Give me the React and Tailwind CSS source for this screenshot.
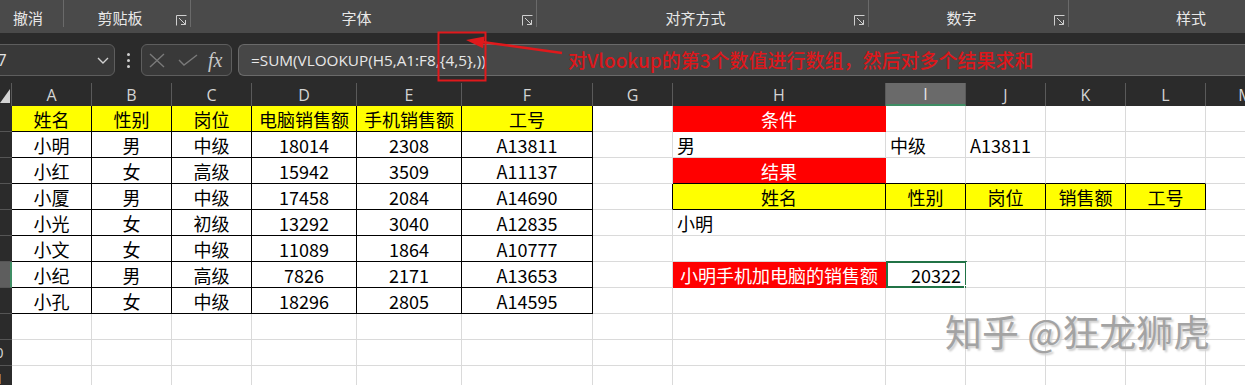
import React from 'react';

const W = ['w-[80px]', 'w-[80px]', 'w-[80px]', 'w-[105px]', 'w-[105px]', 'w-[131px]', 'w-[80px]', 'w-[213px]', 'w-[80px]', 'w-[80px]', 'w-[80px]', 'w-[80px]', 'w-[80px]'];
const LETTERS = ['A', 'B', 'C', 'D', 'E', 'F', 'G', 'H', 'I', 'J', 'K', 'L', 'M'];

const plain = 'bg-white border-[#dadada]';
const boxed = 'bg-white border-black';
const yel = 'bg-[#ffff00] border-black';
const red = 'bg-[#ff0000] border-[#ff0000] text-white';

const tableRows = [
  ['姓名', '性别', '岗位', '电脑销售额', '手机销售额', '工号'],
  ['小明', '男', '中级', '18014', '2308', 'A13811'],
  ['小红', '女', '高级', '15942', '3509', 'A11137'],
  ['小厦', '男', '中级', '17458', '2084', 'A14690'],
  ['小光', '女', '初级', '13292', '3040', 'A12835'],
  ['小文', '女', '中级', '11089', '1864', 'A10777'],
  ['小纪', '男', '高级', '7826', '2171', 'A13653'],
  ['小孔', '女', '中级', '18296', '2805', 'A14595'],
];

function buildRows() {
  const rows = [];
  for (let r = 0; r < 11; r++) {
    const cells = LETTERS.map(() => ({ t: '', s: plain, a: 'justify-center' }));
    if (r < tableRows.length) {
      tableRows[r].forEach((t, c) => {
        cells[c] = { t, s: r === 0 ? yel : boxed, a: 'justify-center' };
      });
    }
    if (r === 0) cells[7] = { t: '条件', s: red, a: 'justify-center' };
    if (r === 1) {
      cells[7] = { t: '男', s: plain, a: 'justify-start pl-[4px]' };
      cells[8] = { t: '中级', s: plain, a: 'justify-start pl-[4px]' };
      cells[9] = { t: 'A13811', s: plain, a: 'justify-start pl-[4px]' };
    }
    if (r === 2) {
      cells[7] = { t: '结果', s: red + ' border-b-black', a: 'justify-center' };
      for (let c = 8; c <= 11; c++) cells[c] = { t: '', s: plain + ' border-b-black', a: '' };
    }
    if (r === 3) {
      cells[6] = { t: '', s: plain + ' border-r-black', a: '' };
      ['姓名', '性别', '岗位', '销售额', '工号'].forEach((t, i) => {
        cells[7 + i] = { t, s: yel, a: 'justify-center' };
      });
    }
    if (r === 4) cells[7] = { t: '小明', s: plain, a: 'justify-start pl-[4px]' };
    if (r === 6) {
      cells[7] = { t: '小明手机加电脑的销售额', s: red, a: 'justify-center' };
      cells[8] = { t: '20322', s: plain, a: 'justify-end pr-[4px]', sel: true };
    }
    rows.push(cells);
  }
  return rows;
}

function Launcher() {
  return (
    <svg width="11" height="11" viewBox="0 0 11 11" fill="none" stroke="#cfcfcf" strokeWidth="1" className="self-end mb-[7px] shrink-0">
      <path d="M0.5 10.5V0.5H10.5" />
      <path d="M3 3L9.5 9.5" />
      <path d="M5 9.5H9.5V5" />
    </svg>
  );
}

function Sep() {
  return <div className="w-px h-[27px] bg-[#6a6a6a] self-start shrink-0" />;
}

function Ribbon() {
  return (
    <div className="h-[33px] bg-[#4a4a4a] flex text-[15px] leading-[20px] text-[#e8e8e8]">
      <div className="w-[63px] flex items-end justify-center pb-[5px] pr-[7px]">撤消</div>
      <Sep />
      <div className="w-[123px] flex mr-[3px]">
        <div className="flex-1 flex items-end justify-center pb-[5px]">剪贴板</div>
        <Launcher />
      </div>
      <Sep />
      <div className="w-[342px] flex mr-[3px]">
        <div className="flex-1 flex items-end justify-center pb-[5px]">字体</div>
        <Launcher />
      </div>
      <Sep />
      <div className="w-[328px] flex mr-[3px]">
        <div className="flex-1 flex items-end justify-center pb-[5px]">对齐方式</div>
        <Launcher />
      </div>
      <Sep />
      <div className="w-[196px] flex mr-[3px]">
        <div className="flex-1 flex items-end justify-center pb-[5px]">数字</div>
        <Launcher />
      </div>
      <Sep />
      <div className="flex-1 flex items-end pb-[5px] pl-[107px]">样式</div>
    </div>
  );
}

function FormulaBar() {
  return (
    <div className="bg-[#2b2b2b] pt-[11px] pb-[7px]">
      <div className="h-[32px] flex items-stretch">
        <div className="-ml-[23px] w-[138px] shrink-0 rounded-[6px] border border-[#5e5e5e] bg-[#393939] flex items-center pl-[15px] pr-[5px]">
          <span className="font-['Open_Sans',sans-serif] text-[16px] text-[#e4e4e4]">I7</span>
          <div className="flex-1" />
          <svg width="12" height="7" viewBox="0 0 12 7" fill="none" stroke="#d0d0d0" strokeWidth="1.4">
            <path d="M1 1l5 5 5-5" />
          </svg>
        </div>
        <div className="w-[26px] shrink-0 flex flex-col items-center justify-center gap-[3px]">
          <span className="w-[3px] h-[3px] bg-[#cfcfcf] rounded-full" />
          <span className="w-[3px] h-[3px] bg-[#cfcfcf] rounded-full" />
          <span className="w-[3px] h-[3px] bg-[#cfcfcf] rounded-full" />
        </div>
        <div className="w-[91px] shrink-0 rounded-[6px] border border-[#5e5e5e] bg-[#393939] flex items-center pl-[7px]">
          <svg width="16" height="15" viewBox="0 0 16 15" fill="none" stroke="#7a7a7a" strokeWidth="1.4">
            <path d="M1 1l14 13M15 1L1 14" />
          </svg>
          <svg width="20" height="12" viewBox="0 0 20 12" fill="none" stroke="#7a7a7a" strokeWidth="1.4" className="ml-[13px]">
            <path d="M1 6l5 5L19 1" />
          </svg>
          <span className="ml-[10px] font-['Liberation_Serif',serif] italic text-[20px] leading-none text-[#c8c8c8]">fx</span>
        </div>
        <div className="flex-1 ml-[6px] rounded-l-[6px] border border-r-0 border-[#6a6a6a] bg-[#474747] flex items-center pl-[12px]">
          <span className="font-['Open_Sans',sans-serif] text-[15.3px] text-[#e8e8e8] whitespace-nowrap">=SUM(VLOOKUP(H5,A1:F8,{'{'}4,5{'}'},))</span>
        </div>
      </div>
    </div>
  );
}

function ColumnHeader() {
  return (
    <div className="h-[23px] bg-[#2b2b2b] flex w-max">
      <div className="w-[12px] shrink-0 border-r border-[#5a5a5a] flex items-end justify-end overflow-hidden">
        <svg width="11" height="14" viewBox="0 0 11 14" className="mb-[3px]">
          <polygon points="0,14 10,14 10,0" fill="#d4d4d4" />
        </svg>
      </div>
      {LETTERS.map((l, i) => (
        <div
          key={l}
          className={`${W[i]} shrink-0 border-r border-[#5a5a5a] flex items-center justify-center font-['Open_Sans',sans-serif] text-[16px] ${i === 8 ? 'bg-[#6a6a6a] border-b-2 border-b-[#3f8d64] text-[#e6e6e6]' : 'text-[#d4d4d4]'}`}
        >
          {l}
        </div>
      ))}
    </div>
  );
}

function Grid() {
  const rows = buildRows();
  return (
    <div className="flex flex-col w-max">
      {rows.map((cells, r) => (
        <div key={r} className="flex">
          <div className={`w-[12px] h-[26px] shrink-0 overflow-hidden flex justify-end border-b border-[#555] ${r === 6 ? 'bg-[#5e5e5e] border-r-2 border-r-[#3f8d64]' : 'bg-[#2b2b2b]'}`}>
            <div className="w-[34px] shrink-0 flex items-center justify-center font-['Open_Sans',sans-serif] text-[15px] text-[#d4d4d4]">{r + 1}</div>
          </div>
          {cells.map((c, i) => (
            <div key={i} className={`${W[i]} h-[26px] shrink-0 border-r border-b flex items-center whitespace-nowrap text-[18px] leading-none relative ${c.s} ${c.a}`}>
              {c.t}
              {c.sel && (
                <div className="absolute left-0 top-[-1px] right-[-2px] bottom-[-1px] border-2 border-[#217346]">
                  <div className="absolute right-[-5px] bottom-[-5px] w-[6px] h-[6px] bg-[#217346] border border-white" />
                </div>
              )}
            </div>
          ))}
        </div>
      ))}
    </div>
  );
}

export default function App() {
  return (
    <div className="w-[1245px] h-[385px] overflow-hidden relative bg-white font-['Noto_Sans_CJK_SC',sans-serif]">
      <Ribbon />
      <FormulaBar />
      <ColumnHeader />
      <Grid />

      <svg className="absolute left-0 top-0 pointer-events-none" width="1245" height="385">
        <rect x="438.5" y="32.5" width="47" height="48" fill="none" stroke="#e0191c" strokeWidth="2" />
        <line x1="562" y1="53" x2="482" y2="42" stroke="#e0191c" strokeWidth="2.5" />
        <polygon points="466,40 484.6,36.5 483,48.3" fill="#e0191c" />
      </svg>
      <div className="absolute left-[568px] top-[47px] text-[19px] leading-[26px] font-medium text-[#dc171b] whitespace-nowrap">
        对Vlookup的第3个数值进行数组，然后对多个结果求和
      </div>
      <div className="absolute left-[945px] top-[306px] text-[37px] leading-[50px] text-[#a3a3a3] whitespace-nowrap [text-shadow:2px_2px_2px_#d0d0d0]">
        知乎 @狂龙狮虎
      </div>
    </div>
  );
}
